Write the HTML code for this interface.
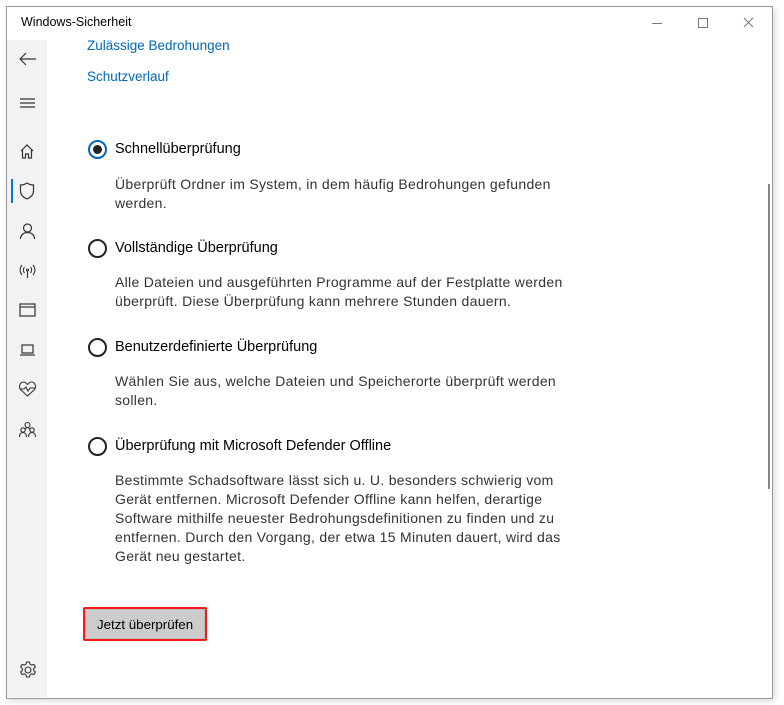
<!DOCTYPE html>
<html><head><meta charset="utf-8"><style>
body{margin:0;width:784px;height:705px;background:#fff;position:relative;overflow:hidden;font-family:"Segoe UI","Liberation Sans",sans-serif;}
.win{position:absolute;left:6px;top:6px;width:765px;height:691px;border:1px solid #9a9a9a;background:#fff;box-shadow:2px 2px 6px rgba(0,0,0,.15);}
.side{position:absolute;left:7px;top:40px;width:40px;height:657px;background:#f2f2f2;}
.t{position:absolute;white-space:nowrap;}
.lnk{color:#0067b8;font-size:13.5px;left:87px;}
.lab{left:115px;font-size:14.5px;color:#000;}
.d{left:115px;font-size:14px;letter-spacing:0.3px;color:#333;}
.r{position:absolute;left:88px;width:15px;height:15px;border:2px solid #222;border-radius:50%;}
.ic{position:absolute;left:17px;}
</style></head><body>
<div class="win"></div>
<div class="side"></div>
<div class="t" style="left:21px;top:15px;font-size:12.5px;color:#000">Windows-Sicherheit</div>
<svg style="position:absolute;left:600px;top:10px" width="170" height="28" stroke="#777" fill="none" stroke-width="1">
<line x1="52" y1="13.5" x2="62" y2="13.5"/><rect x="98.5" y="8.5" width="9" height="9"/><path d="M144 8l9 9M153 8l-9 9"/></svg>
<div style="position:absolute;left:768px;top:184px;width:2px;height:305px;background:#858585"></div>
<svg class="ic" style="top:50px" width="20" height="20" fill="none" stroke="#333" stroke-width="1.2"><path d="M3 9h16M3 9l6-6M3 9l6 6"/></svg>
<svg class="ic" style="top:95px" width="20" height="16" fill="none" stroke="#333" stroke-width="1.2"><path d="M3 4h15M3 8h15M3 12h15"/></svg>
<svg class="ic" style="top:142px" width="20" height="20" fill="none" stroke="#333" stroke-width="1.2"><path d="M4 9l6-6 6 6M5.5 8v8h3v-4h3v4h3V8"/></svg>
<div style="position:absolute;left:11px;top:179px;width:2px;height:24px;background:#0078d4"></div>
<svg class="ic" style="top:181px" width="20" height="20" fill="none" stroke="#333" stroke-width="1.2"><path d="M10 2c3 2 5 2 6.5 2v6c0 4-3 6.5-6.5 8-3.5-1.5-6.5-4-6.5-8V4C5 4 7 4 10 2z"/></svg>
<svg class="ic" style="top:221px" width="20" height="20" fill="none" stroke="#333" stroke-width="1.2"><circle cx="10.5" cy="7" r="4"/><path d="M3.5 18c0-4 3-6.5 7-6.5s7 2.5 7 6.5"/></svg>
<svg class="ic" style="top:261px" width="20" height="20" fill="none" stroke="#333" stroke-width="1.1"><circle cx="10.5" cy="9" r="1"/><path d="M10.5 10v7M7.5 6c-1.5 1.5-1.5 4.5 0 6M13.5 6c1.5 1.5 1.5 4.5 0 6M5 4c-2.5 3-2.5 7 0 10M16 4c2.5 3 2.5 7 0 10"/></svg>
<svg class="ic" style="top:300px" width="20" height="20" fill="none" stroke="#333" stroke-width="1.2"><rect x="3" y="4" width="15" height="12"/><path d="M3 7h15"/></svg>
<svg class="ic" style="top:340px" width="20" height="20" fill="none" stroke="#333" stroke-width="1.2"><rect x="5" y="5" width="11" height="8"/><path d="M3 15h15"/></svg>
<svg class="ic" style="top:379px" width="20" height="20" fill="none" stroke="#333" stroke-width="1.1"><path d="M10.5 17L4 11C1 8 3 3 6.5 3 8.5 3 10 5 10.5 5.5 11 5 12.5 3 14.5 3 18 3 20 8 17 11zM3 10h4l2-2 2 4 2-3h5"/></svg>
<svg class="ic" style="top:420px" width="20" height="20" fill="none" stroke="#333" stroke-width="1.1"><circle cx="10.5" cy="5" r="2.5"/><circle cx="6" cy="10" r="2.2"/><circle cx="15" cy="10" r="2.2"/><path d="M2.5 17c0-3 1.5-4.5 3.5-4.5s3.5 1.5 3.5 4.5M11.5 17c0-3 1.5-4.5 3.5-4.5s3.5 1.5 3.5 4.5M8 10c.5-1.5 1.5-2.5 2.5-2.5s2 1 2.5 2.5"/></svg>
<svg class="ic" style="top:659px" width="22" height="22" fill="none" stroke="#333" stroke-width="1.1"><circle cx="11" cy="11" r="3"/><path d="M9.5 3h3l.5 2.2 1.8 1 2.1-.8 1.5 2.6-1.7 1.5v2l1.7 1.5-1.5 2.6-2.1-.8-1.8 1-.5 2.2h-3l-.5-2.2-1.8-1-2.1.8-1.5-2.6 1.7-1.5v-2L3.6 8l1.5-2.6 2.1.8 1.8-1z"/></svg>
<div class="t lnk" style="top:38px">Zulässige Bedrohungen</div>
<div class="t lnk" style="top:69px">Schutzverlauf</div>
<div class="r" style="top:140px;border-color:#0067b8"></div>
<div style="position:absolute;left:93px;top:145px;width:9px;height:9px;border-radius:50%;background:#222"></div>
<div class="t lab" style="top:141px">Schnellüberprüfung</div>
<div class="t d" style="top:176px">Überprüft Ordner im System, in dem häufig Bedrohungen gefunden</div>
<div class="t d" style="top:195px">werden.</div>
<div class="r" style="top:239px"></div>
<div class="t lab" style="top:240px">Vollständige Überprüfung</div>
<div class="t d" style="top:274px">Alle Dateien und ausgeführten Programme auf der Festplatte werden</div>
<div class="t d" style="top:293px">überprüft. Diese Überprüfung kann mehrere Stunden dauern.</div>
<div class="r" style="top:338px"></div>
<div class="t lab" style="top:339px">Benutzerdefinierte Überprüfung</div>
<div class="t d" style="top:373px">Wählen Sie aus, welche Dateien und Speicherorte überprüft werden</div>
<div class="t d" style="top:392px">sollen.</div>
<div class="r" style="top:437px"></div>
<div class="t lab" style="top:438px">Überprüfung mit Microsoft Defender Offline</div>
<div class="t d" style="top:472px">Bestimmte Schadsoftware lässt sich u. U. besonders schwierig vom</div>
<div class="t d" style="top:491px">Gerät entfernen. Microsoft Defender Offline kann helfen, derartige</div>
<div class="t d" style="top:510px">Software mithilfe neuester Bedrohungsdefinitionen zu finden und zu</div>
<div class="t d" style="top:529px">entfernen. Durch den Vorgang, der etwa 15 Minuten dauert, wird das</div>
<div class="t d" style="top:548px">Gerät neu gestartet.</div>
<div style="position:absolute;left:83px;top:607px;width:120px;height:30px;border:2px solid #ff1a1a;border-radius:2px;background:#ccc;box-shadow:inset 0 0 0 1px #bbb"></div>
<div class="t" style="left:97px;top:617px;font-size:13.3px;color:#000">Jetzt überprüfen</div>
</body></html>
